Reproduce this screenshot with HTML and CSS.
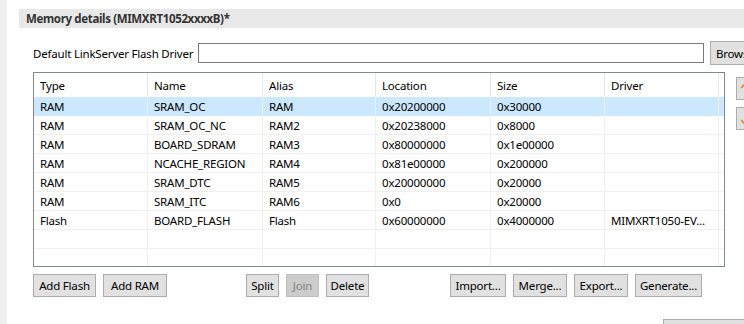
FILE: index.html
```html
<!DOCTYPE html>
<html lang="en">
<head>
    <meta charset="UTF-8">
    <title>Memory details</title>
    <link rel="stylesheet" href="styles.css">
</head>
<body>
    <div class="side-strip"></div>
    <div class="main">
        <div class="section-title">Memory details (MIMXRT1052xxxxB)*</div>

        <div class="section-body">
            <div class="driver-row">
                <label class="driver-label">Default LinkServer Flash Driver</label>
                <div class="driver-input"></div>
                <button class="btn browse-btn">Browse...</button>
            </div>

            <div class="table-row">
                <div class="mem-table">
                    <div class="mem-head">
                        <div class="cell">Type</div>
                        <div class="cell">Name</div>
                        <div class="cell">Alias</div>
                        <div class="cell">Location</div>
                        <div class="cell">Size</div>
                        <div class="cell">Driver</div>
                    </div>
                    <div class="mem-body">
                        <div class="mem-row selected">
                            <div class="cell">RAM</div><div class="cell">SRAM_OC</div><div class="cell">RAM</div>
                            <div class="cell">0x20200000</div><div class="cell">0x30000</div><div class="cell"></div>
                        </div>
                        <div class="mem-row">
                            <div class="cell">RAM</div><div class="cell">SRAM_OC_NC</div><div class="cell">RAM2</div>
                            <div class="cell">0x20238000</div><div class="cell">0x8000</div><div class="cell"></div>
                        </div>
                        <div class="mem-row">
                            <div class="cell">RAM</div><div class="cell">BOARD_SDRAM</div><div class="cell">RAM3</div>
                            <div class="cell">0x80000000</div><div class="cell">0x1e00000</div><div class="cell"></div>
                        </div>
                        <div class="mem-row">
                            <div class="cell">RAM</div><div class="cell">NCACHE_REGION</div><div class="cell">RAM4</div>
                            <div class="cell">0x81e00000</div><div class="cell">0x200000</div><div class="cell"></div>
                        </div>
                        <div class="mem-row">
                            <div class="cell">RAM</div><div class="cell">SRAM_DTC</div><div class="cell">RAM5</div>
                            <div class="cell">0x20000000</div><div class="cell">0x20000</div><div class="cell"></div>
                        </div>
                        <div class="mem-row">
                            <div class="cell">RAM</div><div class="cell">SRAM_ITC</div><div class="cell">RAM6</div>
                            <div class="cell">0x0</div><div class="cell">0x20000</div><div class="cell"></div>
                        </div>
                        <div class="mem-row">
                            <div class="cell">Flash</div><div class="cell">BOARD_FLASH</div><div class="cell">Flash</div>
                            <div class="cell">0x60000000</div><div class="cell">0x4000000</div><div class="cell">MIMXRT1050-EV...</div>
                        </div>
                        <div class="mem-row">
                            <div class="cell"></div><div class="cell"></div><div class="cell"></div>
                            <div class="cell"></div><div class="cell"></div><div class="cell"></div>
                        </div>
                        <div class="mem-row">
                            <div class="cell"></div><div class="cell"></div><div class="cell"></div>
                            <div class="cell"></div><div class="cell"></div><div class="cell"></div>
                        </div>
                    </div>
                </div>

                <div class="side-buttons">
                    <button class="btn icon-btn">
                        <svg width="12" height="14" viewBox="0 0 12 14">
                            <path d="M1 6 L6 1 L11 6 M6 1 V13" fill="none" stroke="#d9901a" stroke-width="1.6"/>
                        </svg>
                    </button>
                    <button class="btn icon-btn">
                        <svg width="12" height="14" viewBox="0 0 12 14">
                            <path d="M1 8 L6 13 L11 8 M6 1 V13" fill="none" stroke="#d9901a" stroke-width="1.6"/>
                        </svg>
                    </button>
                </div>
            </div>

            <div class="button-row">
                <button class="btn w-addflash">Add Flash</button>
                <button class="btn w-addram">Add RAM</button>
                <button class="btn w-split group-gap">Split</button>
                <button class="btn w-join" disabled>Join</button>
                <button class="btn w-delete">Delete</button>
                <button class="btn w-import group-gap2">Import...</button>
                <button class="btn w-merge">Merge...</button>
                <button class="btn w-export">Export...</button>
                <button class="btn w-generate">Generate...</button>
            </div>

            <div class="footer-row">
                <button class="btn footer-btn"></button>
            </div>
        </div>
    </div>
</body>
</html>
```

FILE: styles.css
```css
* {
    margin: 0;
    padding: 0;
    box-sizing: border-box;
    font-family: "Noto Sans", "DejaVu Sans", sans-serif;
}

body {
    width: 744px;
    height: 324px;
    overflow: hidden;
    background-color: #ffffff;
    display: flex;
    font-size: 11.5px;
    letter-spacing: -0.2px;
    color: #000;
}

.side-strip {
    width: 7px;
    flex-shrink: 0;
    background-color: #f0f0f0;
}

.main {
    flex: 1;
    padding: 9px 0 0 12px;
    min-width: 0;
}

.section-title {
    height: 19px;
    line-height: 19px;
    padding-left: 7px;
    background-color: #e8e8e8;
    font-weight: bold;
    letter-spacing: -0.35px;
    color: #333;
    white-space: nowrap;
}

.section-body {
    padding-left: 14px;
    width: 760px;
}

.driver-row {
    display: flex;
    align-items: center;
    height: 24px;
    margin-top: 13px;
}

.driver-label {
    width: 165px;
    flex-shrink: 0;
    white-space: nowrap;
}

.driver-input {
    width: 506px;
    height: 20px;
    flex-shrink: 0;
    border: 1px solid #7a7a7a;
    background: #fff;
}

.btn {
    height: 23px;
    background-color: #e1e1e1;
    border: 1px solid #adadad;
    font-size: 11.5px;
    letter-spacing: -0.2px;
    color: #000;
    white-space: nowrap;
    overflow: hidden;
    padding: 0;
    flex-shrink: 0;
}

.btn:disabled {
    background-color: #cccccc;
    border-color: #bfbfbf;
    color: #838383;
}

.browse-btn {
    margin-left: 6px;
    width: 70px;
    height: 24px;
    text-align: left;
    padding-left: 5px;
}

.table-row {
    display: flex;
    margin-top: 7px;
}

.mem-table {
    width: 692px;
    height: 195px;
    border: 1px solid #828790;
    overflow: hidden;
    flex-shrink: 0;
}

.mem-head,
.mem-row {
    display: grid;
    grid-template-columns: 114px 115px 113px 115px 114px 114px;
}

.mem-head {
    height: 24px;
}

.mem-head .cell {
    line-height: 25px;
    border-right: 1px solid #e5e5e5;
}

.mem-row {
    height: 19px;
    border-bottom: 1px solid #f0f0f0;
}

.mem-row .cell {
    line-height: 19px;
    border-right: 1px solid #f0f0f0;
}

.cell {
    padding-left: 6px;
    white-space: nowrap;
    overflow: hidden;
}

.mem-row.selected {
    background-color: #cce8ff;
    border-bottom-color: #cce8ff;
}

.mem-row.selected .cell {
    border-right-color: #e6f3ff;
}

.side-buttons {
    display: flex;
    flex-direction: column;
    gap: 7px;
    margin-left: 11px;
    padding-top: 5px;
}

.icon-btn {
    width: 24px;
    height: 23px;
    display: flex;
    align-items: center;
    padding-left: 3px;
}

.button-row {
    display: flex;
    gap: 7px;
    margin-top: 7px;
}

.w-addflash { width: 63px; }
.w-addram { width: 64px; }
.w-split { width: 33px; }
.w-join { width: 33px; }
.w-delete { width: 43px; }
.w-import { width: 56px; }
.w-merge { width: 54px; }
.w-export { width: 54px; }
.w-generate { width: 67px; }

.group-gap { margin-left: 72px; }
.group-gap2 { margin-left: 74px; }

.footer-row {
    display: flex;
    margin-top: 22px;
}

.footer-btn {
    margin-left: 630px;
    width: 100px;
    height: 5px;
    border-bottom: none;
}
```
